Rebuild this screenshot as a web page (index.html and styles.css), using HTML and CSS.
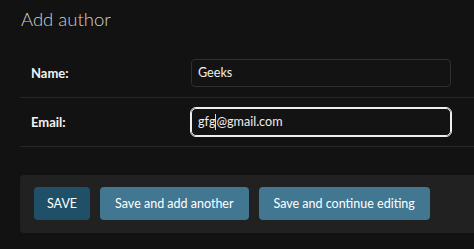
FILE: index.html
```html
<!DOCTYPE html>
<html lang="en">
<head>
<meta charset="utf-8">
<title>Add author</title>
<link rel="stylesheet" href="styles.css">
</head>
<body>
<div class="content">
  <h1 class="title">Add author</h1>
  <form class="form">
    <fieldset class="module">
      <div class="form-row">
        <label class="label">Name:</label>
        <div class="field">Geeks</div>
      </div>
      <div class="form-row">
        <label class="label">Email:</label>
        <div class="field focused">gfg<span class="caret"></span>@gmail.com</div>
      </div>
    </fieldset>
    <div class="submit-row">
      <button type="button" class="btn btn-default">SAVE</button>
      <button type="button" class="btn">Save and add another</button>
      <button type="button" class="btn">Save and continue editing</button>
    </div>
  </form>
</div>
</body>
</html>
```
FILE: styles.css
```css
html, body {
  margin: 0;
  padding: 0;
  background: #121212;
  overflow: hidden;
}
body {
  font-family: Lato, "Open Sans", sans-serif;
  color: #eeeeee;
  width: 474px;
  height: 249px;
}
.content {
  padding-left: 20px;
}
.title {
  margin: 0 0 18px 1px;
  padding-top: 7px;
  font-size: 18.5px;
  line-height: 24px;
  font-weight: 300;
  color: #d0d0d0;
}
.module {
  margin: 0;
  padding: 0;
  border: 0;
}
.form-row {
  display: flex;
  align-items: center;
  padding: 10px 0 10px 11px;
  border-bottom: 1px solid #272727;
}
.label {
  width: 160px;
  font-size: 13px;
  font-weight: 700;
  color: #f2f2f2;
}
.field {
  box-sizing: border-box;
  width: 260px;
  height: 28px;
  padding: 0 6px;
  border: 1px solid #303030;
  border-radius: 4px;
  background: #131313;
  font-size: 12.6px;
  line-height: 26px;
  color: #eeeeee;
  white-space: nowrap;
}
.field.focused {
  border-color: #eeeeee;
  outline: 1px solid #eeeeee;
  border-radius: 5px;
}
.caret {
  display: inline-block;
  width: 1px;
  height: 16px;
  vertical-align: -4px;
  background: #d8d8d8;
}
.submit-row {
  display: flex;
  gap: 10px;
  margin-top: 28px;
  padding: 12px 14px 13px;
  background: #212121;
  border-radius: 4px 0 0 4px;
}
.btn {
  flex: none;
  height: 33px;
  padding: 0 15px;
  border: 0;
  border-radius: 4px;
  background: #427792;
  color: #ffffff;
  font-family: inherit;
  font-size: 12.5px;
  white-space: nowrap;
  cursor: pointer;
}
.btn-default {
  padding: 0 13px;
  background: #205067;
}
```
